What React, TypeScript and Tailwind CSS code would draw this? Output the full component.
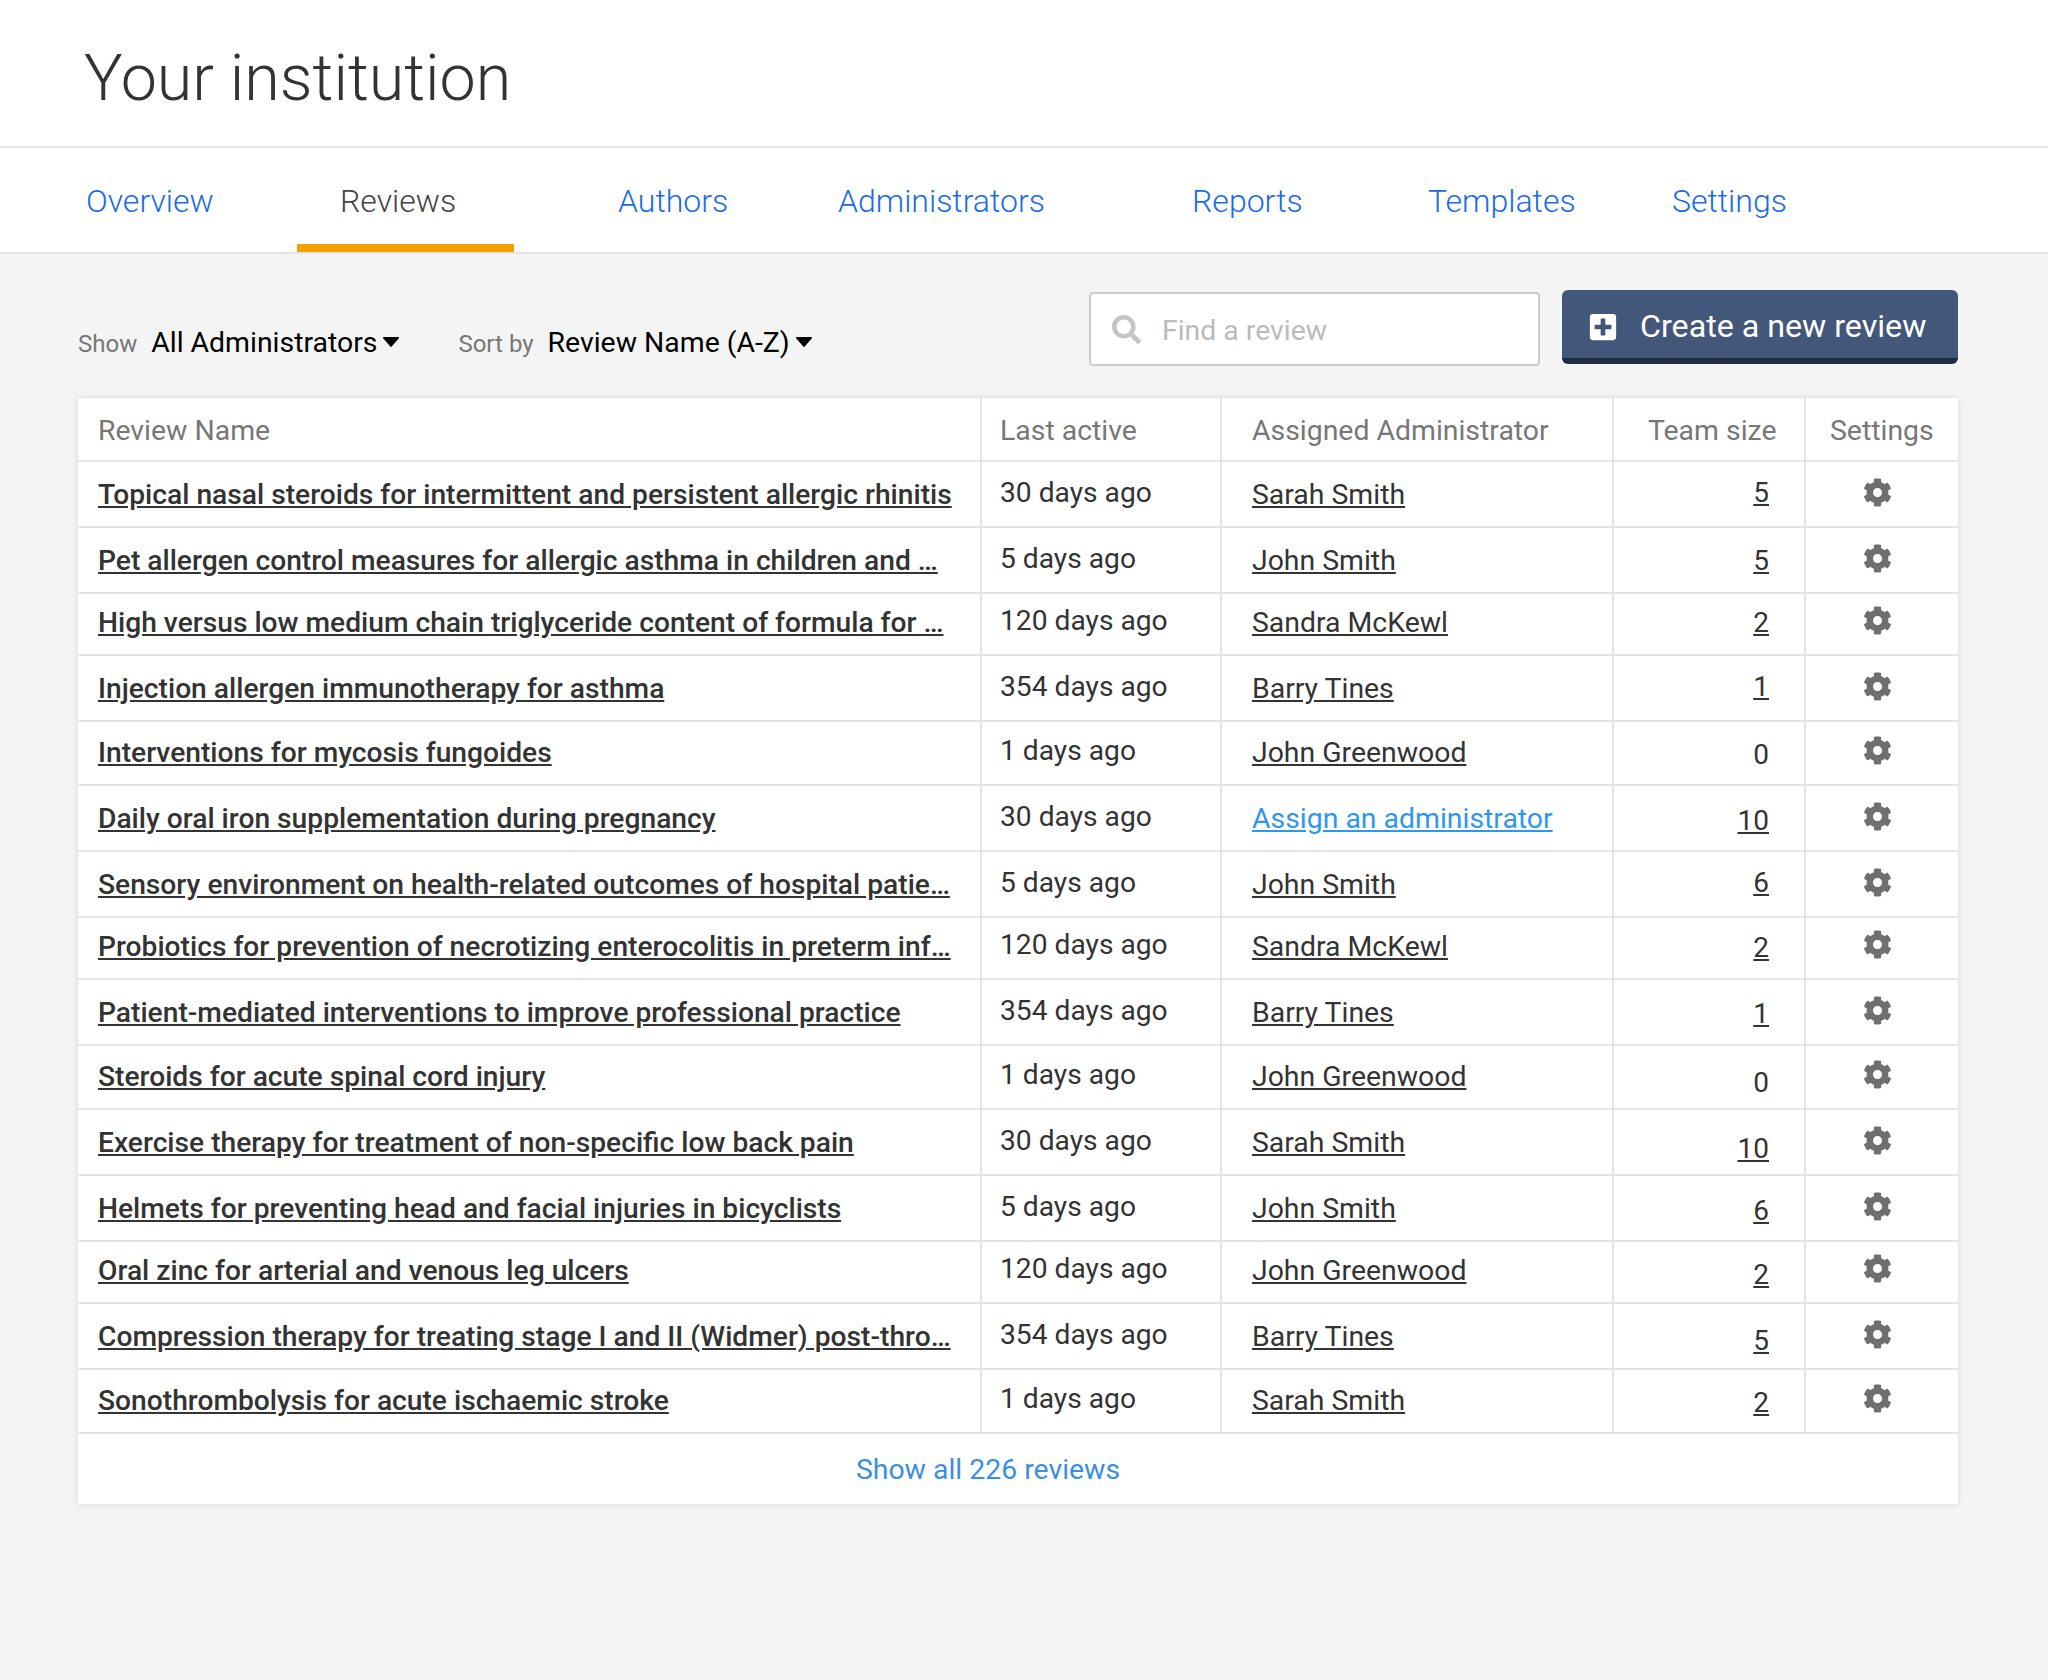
import { FaCog, FaPlusSquare, FaSearch } from "react-icons/fa";

interface Review {
  name: string;
  active: string;
  admin: string;
  team: number;
  teamPad: string; // the team size number sits at a different height on each row of the mockup
}

const reviews: Review[] = [
  { name: "Topical nasal steroids for intermittent and persistent allergic rhinitis", active: "30 days ago", admin: "Sarah Smith", team: 5, teamPad: "pb-[17px]" },
  { name: "Pet allergen control measures for allergic asthma in children and …", active: "5 days ago", admin: "John Smith", team: 5, teamPad: "pb-[15px]" },
  { name: "High versus low medium chain triglyceride content of formula for …", active: "120 days ago", admin: "Sandra McKewl", team: 2, teamPad: "pb-[15px]" },
  { name: "Injection allergen immunotherapy for asthma", active: "354 days ago", admin: "Barry Tines", team: 1, teamPad: "pb-[17px]" },
  { name: "Interventions for mycosis fungoides", active: "1 days ago", admin: "John Greenwood", team: 0, teamPad: "pb-[13px]" },
  { name: "Daily oral iron supplementation during pregnancy", active: "30 days ago", admin: "Assign an administrator", team: 10, teamPad: "pb-[13px]" },
  { name: "Sensory environment on health-related outcomes of hospital patie…", active: "5 days ago", admin: "John Smith", team: 6, teamPad: "pb-[17px]" },
  { name: "Probiotics for prevention of necrotizing enterocolitis in preterm inf…", active: "120 days ago", admin: "Sandra McKewl", team: 2, teamPad: "pb-[14px]" },
  { name: "Patient-mediated interventions to improve professional practice", active: "354 days ago", admin: "Barry Tines", team: 1, teamPad: "pb-[14px]" },
  { name: "Steroids for acute spinal cord injury", active: "1 days ago", admin: "John Greenwood", team: 0, teamPad: "pb-[9px]" },
  { name: "Exercise therapy for treatment of non-specific low back pain", active: "30 days ago", admin: "Sarah Smith", team: 10, teamPad: "pb-[9px]" },
  { name: "Helmets for preventing head and facial injuries in bicyclists", active: "5 days ago", admin: "John Smith", team: 6, teamPad: "pb-[13px]" },
  { name: "Oral zinc for arterial and venous leg ulcers", active: "120 days ago", admin: "John Greenwood", team: 2, teamPad: "pb-[11px]" },
  { name: "Compression therapy for treating stage I and II (Widmer) post-thro…", active: "354 days ago", admin: "Barry Tines", team: 5, teamPad: "pb-[11px]" },
  { name: "Sonothrombolysis for acute ischaemic stroke", active: "1 days ago", admin: "Sarah Smith", team: 2, teamPad: "pb-[13px]" },
];

// row heights repeat in this order in the mockup
const rowHeights = ["h-[66px]", "h-[66px]", "h-[62px]", "h-[66px]", "h-[64px]"];
const gearPads = ["pt-[16px]", "pt-[16px]", "pt-[12px]", "pt-[16px]", "pt-[14px]"];

const tabs = [
  { label: "Overview", className: "w-[297px] pl-[86px]" },
  { label: "Reviews", className: "w-[217px] pl-[43px] text-[#444] border-b-8 border-[#f59f00]" },
  { label: "Authors", className: "w-[324px] pl-[104px]" },
  { label: "Administrators", className: "w-[354px]" },
  { label: "Reports", className: "w-[236px]" },
  { label: "Templates", className: "w-[244px]" },
  { label: "Settings", className: "w-[200px]" },
];

const gridCols = "grid grid-cols-[904px_240px_392px_192px_1fr]";
const cellLine = "border-r-2 border-[#e5e5e5]";

const Caret = () => (
  <svg width="16" height="10" viewBox="0 0 16 10" className="ml-[6px] -translate-y-[5px] fill-black">
    <path d="M1 0h14c.9 0 1.3 1 .7 1.6L8.7 9.6c-.4.5-1 .5-1.4 0L.3 1.6C-.3 1 .1 0 1 0z" />
  </svg>
);

const App = () => {
  return (
    <div className="min-h-[1680px] bg-[#f4f4f4] font-['Roboto',sans-serif] text-[28px] text-[#333]">
      <header className="h-[148px] border-b-2 border-[#e5e5e5] bg-white pl-[84px] pt-[40px]">
        <h1 className="text-[64.6px] font-light leading-[76px] text-[#333]">Your institution</h1>
      </header>

      <nav className="flex h-[106px] border-b-2 border-[#e5e5e5] bg-white text-[32px] font-light text-[#1a6be8]">
        {tabs.map((tab) => (
          <a key={tab.label} href="#" className={`h-[104px] pt-[35px] leading-[36px] ${tab.className}`}>
            {tab.label}
          </a>
        ))}
      </nav>

      <main className="pl-[78px] pr-[90px] pt-[36px]">
        <div className="flex h-[108px] items-start justify-between">
          <div className="flex items-baseline pt-[33px] text-[28.4px] leading-[40px]">
            <span className="mr-[14px] text-[24px] text-[#777]">Show</span>
            <span className="text-black">All Administrators</span>
            <Caret />
            <span className="ml-[59px] mr-[14px] text-[24px] text-[#777]">Sort by</span>
            <span className="text-black">Review Name (A-Z)</span>
            <Caret />
          </div>
          <div className="flex gap-[22px]">
            <div className="mt-[2px] flex h-[74px] w-[451px] items-center rounded-[4px] border-2 border-[#ccc] bg-white pl-[21px] text-[28.4px] text-[#bbb]">
              <FaSearch className="mr-[21px] text-[#c4c4c4]" size={29} />
              <span className="pt-[4px]">Find a review</span>
            </div>
            <button className="flex h-[74px] w-[396px] items-center rounded-[6px] border-b-[6px] border-[#1f2c44] bg-[#43577b] pl-[26px] pt-[5px] text-[32.2px] text-white">
              <FaPlusSquare className="mr-[22px]" size={30} />
              Create a new review
            </button>
          </div>
        </div>

        <section className="bg-white shadow-[0_0_6px_rgba(0,0,0,0.12)]">
          <div className={`${gridCols} h-[64px] border-b-2 border-[#e5e5e5] text-[28.4px] text-[#777]`}>
            <div className={`${cellLine} pl-[20px] pt-[12px]`}>Review Name</div>
            <div className={`${cellLine} pl-[18px] pt-[12px]`}>Last active</div>
            <div className={`${cellLine} pl-[30px] pt-[12px]`}>Assigned Administrator</div>
            <div className={`${cellLine} pl-[34px] pt-[12px]`}>Team size</div>
            <div className="pl-[24px] pt-[12px]">Settings</div>
          </div>

          {reviews.map((review, index) => (
            <div
              key={review.name}
              className={`${gridCols} border-b-2 border-[#e5e5e5] ${rowHeights[index % 5]}`}
            >
              <div className={`${cellLine} flex items-end pb-[15px] pl-[20px] text-[28.2px] font-medium leading-[33px]`}>
                <a href="#" className="underline">{review.name}</a>
              </div>
              <div className={`${cellLine} flex items-end pb-[17px] pl-[18px] text-[28.2px] leading-[33px]`}>{review.active}</div>
              <div className={`${cellLine} flex items-end pb-[15px] pl-[30px] text-[28.4px] leading-[33px]`}>
                {review.admin.startsWith("Assign") ? (
                  <a href="#" className="text-[#2f96ee] underline">{review.admin}</a>
                ) : (
                  <a href="#" className="underline">{review.admin}</a>
                )}
              </div>
              <div className={`${cellLine} flex items-end justify-end pr-[35px] leading-[33px] ${review.teamPad}`}>
                {review.team > 0 ? <a href="#" className="underline">{review.team}</a> : review.team}
              </div>
              <div className={`flex items-start justify-center pr-[9px] text-[#6f6f6f] ${gearPads[index % 5]}`}>
                <FaCog size={29} />
              </div>
            </div>
          ))}

          <div className="flex h-[70px] items-center justify-center pr-[60px] pt-[2px] text-[28.4px] text-[#3a8ee6]">
            <a href="#">Show all 226 reviews</a>
          </div>
        </section>
      </main>
    </div>
  );
};

export default App;
